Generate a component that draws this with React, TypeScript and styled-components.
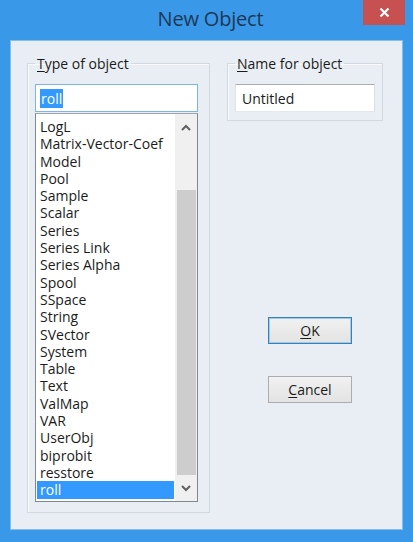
import React from "react";
import styled, { createGlobalStyle } from "styled-components";

const GlobalStyle = createGlobalStyle`
  html, body {
    margin: 0;
    padding: 0;
    background: #3a98e8;
  }
  body {
    font-family: "Open Sans", "Noto Sans", "DejaVu Sans", sans-serif;
  }
`;

const FONT = `"Open Sans", "Noto Sans", "DejaVu Sans", sans-serif`;

const items = [
  "LogL",
  "Matrix-Vector-Coef",
  "Model",
  "Pool",
  "Sample",
  "Scalar",
  "Series",
  "Series Link",
  "Series Alpha",
  "Spool",
  "SSpace",
  "String",
  "SVector",
  "System",
  "Table",
  "Text",
  "ValMap",
  "VAR",
  "UserObj",
  "biprobit",
  "resstore",
  "roll",
];

const Window = styled.div`
  width: 413px;
  height: 542px;
  background: #3a98e8;
  display: flex;
  flex-direction: column;
  box-sizing: border-box;
`;

const TitleBar = styled.div`
  height: 40px;
  display: grid;
  grid-template-columns: 1fr auto 1fr;
  align-items: start;
`;

const Title = styled.div`
  grid-column: 2;
  padding: 5px 0 0 8px;
  font-family: ${FONT};
  font-size: 20px;
  line-height: 28px;
  color: #1d3857;
  letter-spacing: -0.2px;
`;

const CloseButton = styled.div`
  grid-column: 3;
  justify-self: end;
  margin-right: 8px;
  width: 42px;
  height: 25px;
  background: #c75050;
  display: flex;
  align-items: center;
  justify-content: center;
`;

const Client = styled.div`
  margin: 0 10px;
  height: 490px;
  box-sizing: border-box;
  background: #e9eef4;
  border: 1px solid #86bdef;
  display: flex;
  gap: 17px;
  padding: 13px 0 0 16px;
`;

const Group = styled.fieldset<{ $w: number; $pr: number; $pb: number }>`
  margin: 0;
  width: ${(p) => p.$w}px;
  box-sizing: border-box;
  border: 1px solid #d2d9e1;
  box-shadow: inset 1px 1px 0 #f7f9fb;
  padding: 11px ${(p) => p.$pr}px ${(p) => p.$pb}px 7px;
  min-width: 0;
  align-self: flex-start;
`;

const Legend = styled.legend`
  padding: 0 2px;
  font-family: ${FONT};
  font-size: 14px;
  line-height: 19px;
  color: #1b1b1b;
`;

const Key = styled.span`
  text-decoration: underline;
  text-underline-offset: 2px;
  text-decoration-thickness: 1px;
`;

const TextBox = styled.div<{ $focused?: boolean }>`
  height: 28px;
  box-sizing: border-box;
  background: #ffffff;
  border: 1px solid;
  border-color: ${(p) =>
    p.$focused ? "#7eb4ea" : "#abadb3 #dbdfe6 #e3e9ef #e2e3ea"};
  display: flex;
  align-items: center;
  padding-left: ${(p) => (p.$focused ? 4 : 6)}px;
  font-family: ${FONT};
  font-size: 14px;
  color: #1b1b1b;
`;

const Selected = styled.span`
  background: #3399ff;
  color: #ffffff;
  padding: 0 1px;
  line-height: 19px;
`;

const ListBox = styled.div`
  margin-top: 1px;
  height: 389px;
  box-sizing: border-box;
  border: 1px solid #828790;
  border-top-color: #a0a4aa;
  background: #ffffff;
  display: flex;
`;

const Rows = styled.div`
  flex: 1;
  padding: 4px 1px 0 1px;
  overflow: hidden;
`;

const Row = styled.div<{ $sel?: boolean }>`
  height: 17.3px;
  line-height: 17.3px;
  padding-left: 3px;
  font-family: ${FONT};
  font-size: 14px;
  color: ${(p) => (p.$sel ? "#ffffff" : "#1b1b1b")};
  background: ${(p) => (p.$sel ? "#3399ff" : "transparent")};
  white-space: nowrap;
`;

const ScrollBar = styled.div`
  width: 22px;
  background: #f0f0f0;
  display: flex;
  flex-direction: column;
  align-items: center;
`;

const Arrow = styled.div`
  height: 26px;
  width: 100%;
  display: flex;
  align-items: center;
  justify-content: center;
`;

const Track = styled.div`
  flex: 1;
  width: 100%;
  display: flex;
  flex-direction: column;
  align-items: center;
  padding-top: 50px;
  box-sizing: border-box;
`;

const Thumb = styled.div`
  flex: 1;
  width: 19px;
  background: #cdcdcd;
`;

const RightColumn = styled.div`
  width: 156px;
  display: flex;
  flex-direction: column;
`;

const Buttons = styled.div`
  margin-top: 196px;
  padding-left: 41px;
  display: flex;
  flex-direction: column;
  gap: 32px;
`;

const Button = styled.div<{ $default?: boolean }>`
  width: 84px;
  height: 27px;
  box-sizing: border-box;
  border: 1px solid ${(p) => (p.$default ? "#3c7fb1" : "#acacac")};
  box-shadow: ${(p) => (p.$default ? "inset 0 0 0 1px #9ccaf0" : "none")};
  background: linear-gradient(#f1f1f1, #e3e3e3);
  display: flex;
  align-items: center;
  justify-content: center;
  font-family: ${FONT};
  font-size: 14px;
  color: #1b1b1b;
`;

const Chevron = ({ up }: { up?: boolean }) => (
  <svg width="10" height="7" viewBox="0 0 10 7">
    <polyline
      points={up ? "1,6 5,2 9,6" : "1,1 5,5 9,1"}
      fill="none"
      stroke="#606060"
      strokeWidth="2"
    />
  </svg>
);

export default function App() {
  return (
    <>
      <GlobalStyle />
      <Window>
        <TitleBar>
          <Title>New Object</Title>
          <CloseButton>
            <svg width="11" height="11" viewBox="0 0 11 11">
              <path
                d="M1.5 1.5 L9.5 9.5 M9.5 1.5 L1.5 9.5"
                stroke="#ffffff"
                strokeWidth="2.2"
              />
            </svg>
          </CloseButton>
        </TitleBar>
        <Client>
          <Group $w={183} $pr={11} $pb={10}>
            <Legend>
              <Key>T</Key>ype of object
            </Legend>
            <TextBox $focused>
              <Selected>roll</Selected>
            </TextBox>
            <ListBox>
              <Rows>
                {items.map((it, i) => (
                  <Row key={it} $sel={i === items.length - 1}>
                    {it}
                  </Row>
                ))}
              </Rows>
              <ScrollBar>
                <Arrow>
                  <Chevron up />
                </Arrow>
                <Track>
                  <Thumb />
                </Track>
                <Arrow>
                  <Chevron />
                </Arrow>
              </ScrollBar>
            </ListBox>
          </Group>
          <RightColumn>
            <Group $w={156} $pr={7} $pb={8}>
              <Legend>
                <Key>N</Key>ame for object
              </Legend>
              <TextBox>Untitled</TextBox>
            </Group>
            <Buttons>
              <Button $default>
                <span>
                  <Key>O</Key>K
                </span>
              </Button>
              <Button>
                <span>
                  <Key>C</Key>ancel
                </span>
              </Button>
            </Buttons>
          </RightColumn>
        </Client>
      </Window>
    </>
  );
}
